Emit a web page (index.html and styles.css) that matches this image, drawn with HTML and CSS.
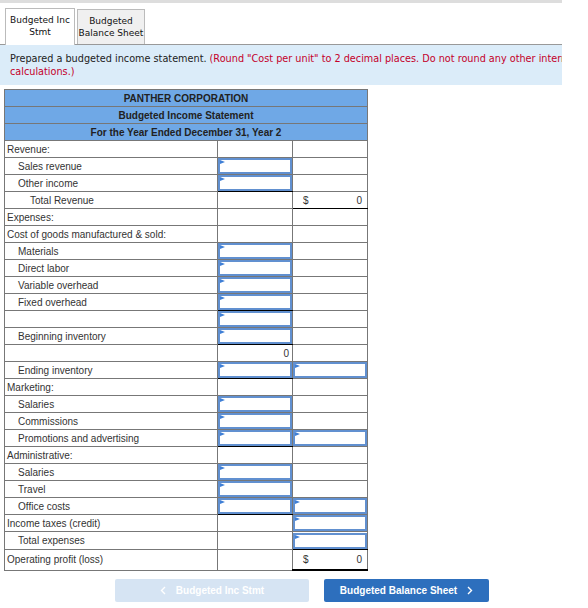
FILE: index.html
```
<!DOCTYPE html>
<html lang="en">
<head>
  <meta charset="UTF-8" />
  <title>Budgeted Income Statement</title>
  <link rel="stylesheet" href="styles.css">
</head>
<body>
  <div class="pagina">
    <div class="barra"></div>

    <div class="pestanas">
      <div class="pestana activa">Budgeted Inc<br>Stmt</div>
      <div class="pestana">Budgeted<br>Balance Sheet</div>
    </div>

    <div class="indicacion">
      Prepared a budgeted income statement. <span class="nota">(Round "Cost per unit" to 2 decimal places. Do not round any other intermediate calculations.)</span>
    </div>

    <table class="estado">
      <colgroup>
        <col class="c-etiqueta">
        <col class="c-monto">
        <col class="c-monto">
      </colgroup>
      <tr><th colspan="3">PANTHER CORPORATION</th></tr>
      <tr><th colspan="3">Budgeted Income Statement</th></tr>
      <tr><th colspan="3">For the Year Ended December 31, Year 2</th></tr>

      <tr><td class="n0">Revenue:</td><td></td><td></td></tr>
      <tr><td class="n1">Sales revenue</td><td><div class="campo"></div></td><td></td></tr>
      <tr><td class="n1">Other income</td><td class="linea"><div class="campo"></div></td><td></td></tr>
      <tr><td class="n2">Total Revenue</td><td></td><td class="linea"><div class="total"><span>$</span><span>0</span></div></td></tr>

      <tr><td class="n0">Expenses:</td><td></td><td></td></tr>
      <tr><td class="n0">Cost of goods manufactured &amp; sold:</td><td></td><td></td></tr>
      <tr><td class="n1">Materials</td><td><div class="campo"></div></td><td></td></tr>
      <tr><td class="n1">Direct labor</td><td><div class="campo"></div></td><td></td></tr>
      <tr><td class="n1">Variable overhead</td><td><div class="campo"></div></td><td></td></tr>
      <tr><td class="n1">Fixed overhead</td><td class="linea"><div class="campo"></div></td><td></td></tr>
      <tr><td class="n1"></td><td><div class="campo"></div></td><td></td></tr>
      <tr><td class="n1">Beginning inventory</td><td class="linea"><div class="campo"></div></td><td></td></tr>
      <tr><td class="n1"></td><td class="cifra">0</td><td></td></tr>
      <tr><td class="n1">Ending inventory</td><td class="linea"><div class="campo"></div></td><td><div class="campo"></div></td></tr>

      <tr><td class="n0">Marketing:</td><td></td><td></td></tr>
      <tr><td class="n1">Salaries</td><td><div class="campo"></div></td><td></td></tr>
      <tr><td class="n1">Commissions</td><td><div class="campo"></div></td><td></td></tr>
      <tr><td class="n1">Promotions and advertising</td><td class="linea"><div class="campo"></div></td><td><div class="campo"></div></td></tr>

      <tr><td class="n0">Administrative:</td><td></td><td></td></tr>
      <tr><td class="n1">Salaries</td><td><div class="campo"></div></td><td></td></tr>
      <tr><td class="n1">Travel</td><td><div class="campo"></div></td><td></td></tr>
      <tr><td class="n1">Office costs</td><td class="linea"><div class="campo"></div></td><td><div class="campo"></div></td></tr>

      <tr><td class="n0">Income taxes (credit)</td><td></td><td><div class="campo"></div></td></tr>
      <tr class="alta"><td class="n1">Total expenses</td><td></td><td class="linea"><div class="campo"></div></td></tr>
      <tr class="final"><td class="n0">Operating profit (loss)</td><td></td><td class="doble"><div class="total"><span>$</span><span>0</span></div></td></tr>
    </table>

    <div class="navegacion">
      <button class="boton apagado">
        <svg width="6" height="9" viewBox="0 0 6 9"><path d="M5 1 L1.5 4.5 L5 8" fill="none" stroke="#fff" stroke-width="1.4"/></svg>
        Budgeted Inc Stmt
      </button>
      <button class="boton">
        Budgeted Balance Sheet
        <svg width="6" height="9" viewBox="0 0 6 9"><path d="M1 1 L4.5 4.5 L1 8" fill="none" stroke="#fff" stroke-width="1.4"/></svg>
      </button>
    </div>
  </div>
</body>
</html>
```

FILE: styles.css
```
body {
  margin: 0;
  background: #fff;
  font-family: "Liberation Sans", Arial, sans-serif;
  color: #333;
}

.pagina {
  width: 562px;
  overflow: hidden;
}

.barra {
  height: 3px;
  background: #dddddd;
}

.pestanas {
  display: flex;
  gap: 2px;
  padding: 5px 0 0 5px;
  height: 36px;
  align-items: flex-end;
}

.pestana {
  width: 68px;
  height: 35px;
  box-sizing: border-box;
  border: 1px solid #bbb;
  border-bottom: none;
  background: #f0f0f0;
  font-family: "DejaVu Sans", Verdana, sans-serif;
  font-size: 9px;
  line-height: 12px;
  color: #111;
  text-align: center;
  padding-top: 5px;
}

.pestana.activa {
  width: 70px;
  height: 37px;
  background: #fff;
  margin-bottom: -1px;
  position: relative;
}

/* la caja de indicaciones es más ancha que la página y se recorta */
.indicacion {
  width: 610px;
  border-top: 1px solid #999;
  background: #dbecf9;
  padding: 7px 10px 7px 10px;
  font-family: "DejaVu Sans", Verdana, sans-serif;
  font-size: 9.7px;
  line-height: 13px;
  color: #222;
}

.nota {
  color: #c4002a;
}

.estado {
  border-collapse: collapse;
  margin: 4px 0 0 4px;
  width: 364px;
  font-size: 10px;
}

.c-etiqueta { width: 213px; }
.c-monto { width: 75px; }

.estado th {
  background: #6fa8e6;
  border: 1px solid #777;
  height: 16px;
  padding: 0;
  font-weight: bold;
  color: #222;
  text-align: center;
}

.estado td {
  border: 1px solid #777;
  height: 16px;
  padding: 0;
  white-space: nowrap;
}

.n0 { padding-left: 2px !important; }
.n1 { padding-left: 13px !important; }
.n2 { padding-left: 25px !important; }

.estado td.linea {
  border-bottom: 1px solid #000;
}

.estado td.doble {
  border-top: 1px solid #000;
  border-bottom: 2px solid #000;
}

.alta td { height: 17px; }
.final td { height: 19px; }

.cifra {
  text-align: right;
  padding-right: 3px !important;
}

.total {
  display: flex;
  justify-content: space-between;
  padding: 0 5px 0 10px;
}

.campo {
  position: relative;
  height: 16px;
  box-sizing: border-box;
  border: 2px solid #6190d0;
}

/* marca azul en la esquina del campo */
.campo::before {
  content: "";
  position: absolute;
  top: 0;
  left: 0;
  border-top: 2.5px solid transparent;
  border-bottom: 2.5px solid transparent;
  border-left: 5px solid #3f7fd6;
}

.navegacion {
  display: flex;
  gap: 15px;
  padding: 8px 0 0 115px;
}

.boton {
  height: 23px;
  border: none;
  border-radius: 2px;
  background: #2d6fbd;
  color: #fff;
  font-family: "Liberation Sans", Arial, sans-serif;
  font-size: 10px;
  font-weight: bold;
  display: flex;
  align-items: center;
  justify-content: center;
  gap: 10px;
  width: 165px;
  padding: 0;
}

.boton.apagado {
  background: #d6e4f3;
  width: 194px;
}
```
